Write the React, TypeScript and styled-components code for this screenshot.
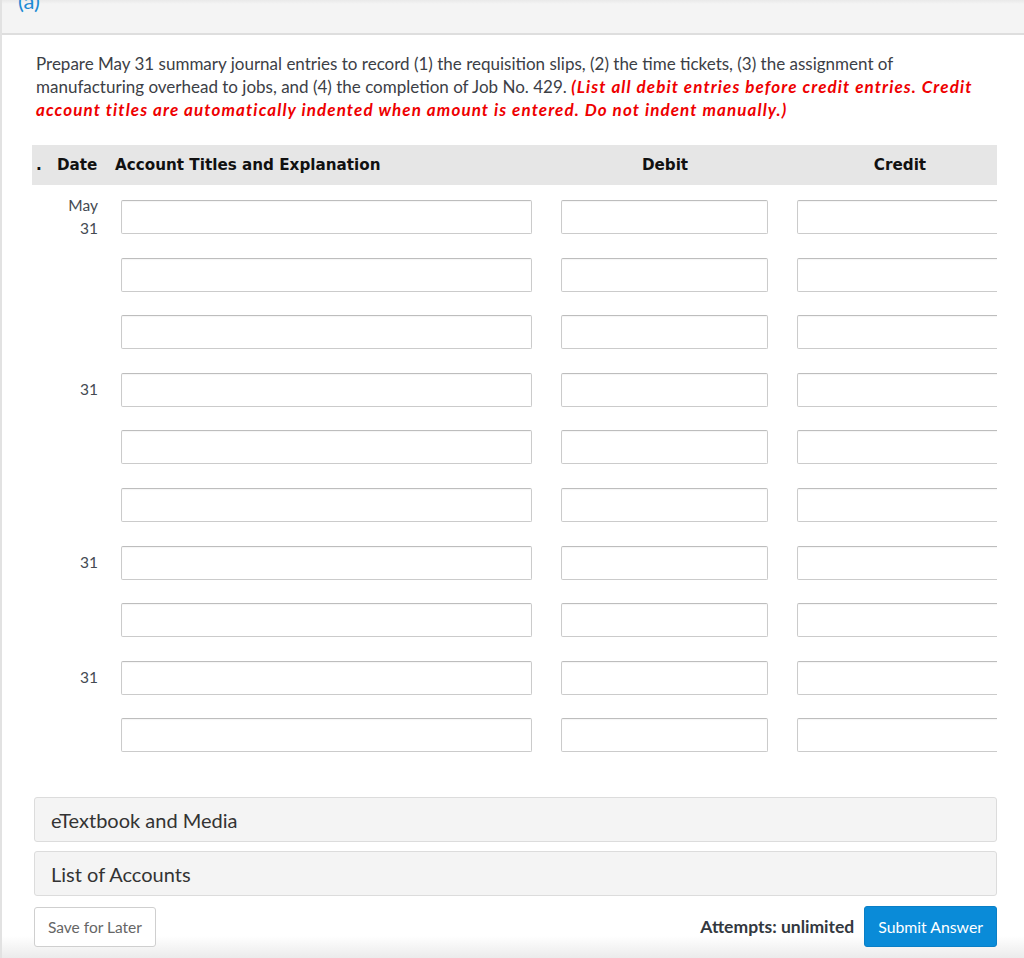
import React from 'react'
import styled, { createGlobalStyle } from 'styled-components'

const GlobalStyle = createGlobalStyle`
  html, body {
    margin: 0;
    padding: 0;
  }

  body {
    min-height: 100vh;
    background: linear-gradient(to bottom, #ffffff calc(100% - 22px), #ebebeb);
    font-family: Lato, "Open Sans", sans-serif;
  }
`

const Page = styled.div`
  min-height: 100vh;
  border-left: 2px solid #e2e2e2;
  box-sizing: border-box;
`

const PartBar = styled.div`
  height: 33px;
  background: linear-gradient(to bottom, #e9e9e9 0, #f4f4f4 4px);
  border-bottom: 2px solid #dedede;
  overflow: hidden;
  padding-left: 16px;
`

const PartLabel = styled.span`
  display: block;
  margin-top: -10px;
  font-size: 22px;
  line-height: 22px;
  color: #1b8bd4;
`

const Body = styled.main`
  padding: 17px 27px 0 30px;
`

const Prompt = styled.p`
  margin: 0 0 0 4px;
  font-size: 17px;
  line-height: 23px;
  color: #3c4046;
`

const Note = styled.em`
  font-weight: 700;
  color: #ee0000;
  letter-spacing: 1.1px;
`

const Journal = styled.div`
  margin-top: 24px;
  overflow: hidden;
`

const columns = '18px 60px 437px 236px 214px'

const HeadRow = styled.div`
  display: grid;
  grid-template-columns: ${columns};
  height: 40px;
  align-items: center;
  background: #e6e6e6;
  font-family: "DejaVu Sans", Verdana, sans-serif;
  font-weight: 700;
  font-size: 15.2px;
  color: #111;
`

const HeadCell = styled.div<{ $align?: 'left' | 'center'; $pad?: number }>`
  text-align: ${p => p.$align ?? 'left'};
  padding-left: ${p => p.$pad ?? 0}px;
  white-space: nowrap;
`

const Rows = styled.div`
  display: flex;
  flex-direction: column;
  gap: 23.6px;
  padding-top: 15px;
`

const Row = styled.div`
  display: grid;
  grid-template-columns: ${columns};
  grid-template-rows: 34px;
  height: 34px;
`

const DateCell = styled.div`
  grid-column: 2;
  height: 34px;
  min-height: 0;
  display: flex;
  flex-direction: column;
  justify-content: center;
  align-items: flex-end;
  padding-right: 12px;
  font-size: 15.5px;
  line-height: 23px;
  color: #444a52;
`

const Field = styled.input<{ $offset: number; $width: number }>`
  box-sizing: border-box;
  height: 34px;
  width: ${p => p.$width}px;
  margin: 0 0 0 ${p => p.$offset}px;
  border: 1px solid #cbcbcb;
  border-top-color: #bdbdbd;
  border-radius: 2px;
  background: #fff;
  box-shadow: inset 0 1px 1px rgba(0, 0, 0, 0.04);
  padding: 0 6px;
  font: inherit;
`

const Panel = styled.div`
  margin: 45px 0 0 2px;
  height: 45px;
  box-sizing: border-box;
  display: flex;
  align-items: center;
  padding-left: 16px;
  background: #f4f4f4;
  border: 1px solid #dcdcdc;
  border-radius: 3px;
  font-size: 20px;
  color: #333;

  & + & {
    margin-top: 9px;
  }
`

const Footer = styled.div`
  display: flex;
  align-items: center;
  margin: 10px 0 0 2px;
`

const SaveButton = styled.button`
  height: 40px;
  padding: 0 13px;
  background: #fff;
  border: 1px solid #cfcfcf;
  border-radius: 3px;
  font-family: Lato, sans-serif;
  font-size: 15.5px;
  color: #666;
`

const Attempts = styled.span`
  margin-left: auto;
  margin-right: 10px;
  font-size: 17.5px;
  font-weight: 700;
  color: #333840;
`

const SubmitButton = styled.button`
  height: 41px;
  padding: 0 13px;
  background: #0a8bd8;
  border: 1px solid #0a7fc6;
  border-radius: 3px;
  font-family: Lato, sans-serif;
  font-size: 15.8px;
  color: #fff;
`

type Entry = { date?: string[] }

const entries: Entry[] = [
  { date: ['May', '31'] },
  {},
  {},
  { date: ['31'] },
  {},
  {},
  { date: ['31'] },
  {},
  { date: ['31'] },
  {},
]

const App = () => (
  <>
    <GlobalStyle />
    <Page>
      <PartBar>
        <PartLabel>(a)</PartLabel>
      </PartBar>
      <Body>
        <Prompt>
          Prepare May 31 summary journal entries to record (1) the requisition slips, (2) the time tickets, (3) the assignment of
          <br />
          manufacturing overhead to jobs, and (4) the completion of Job No. 429.{' '}
          <Note>
            (List all debit entries before credit entries. Credit
            <br />
            account titles are automatically indented when amount is entered. Do not indent manually.)
          </Note>
        </Prompt>

        <Journal>
          <HeadRow>
            <HeadCell $pad={4}>.</HeadCell>
            <HeadCell $pad={7}>Date</HeadCell>
            <HeadCell $pad={5}>Account Titles and Explanation</HeadCell>
            <HeadCell $align="center">Debit</HeadCell>
            <HeadCell $align="center" $pad={20}>Credit</HeadCell>
          </HeadRow>
          <Rows>
            {entries.map((entry, i) => (
              <Row key={i}>
                <DateCell>
                  {entry.date?.map(line => (
                    <span key={line}>{line}</span>
                  ))}
                </DateCell>
                <Field $offset={11} $width={411} />
                <Field $offset={14} $width={207} />
                <Field $offset={14} $width={220} />
              </Row>
            ))}
          </Rows>
        </Journal>

        <Panel>eTextbook and Media</Panel>
        <Panel>List of Accounts</Panel>

        <Footer>
          <SaveButton>Save for Later</SaveButton>
          <Attempts>Attempts: unlimited</Attempts>
          <SubmitButton>Submit Answer</SubmitButton>
        </Footer>
      </Body>
    </Page>
  </>
)

export default App
